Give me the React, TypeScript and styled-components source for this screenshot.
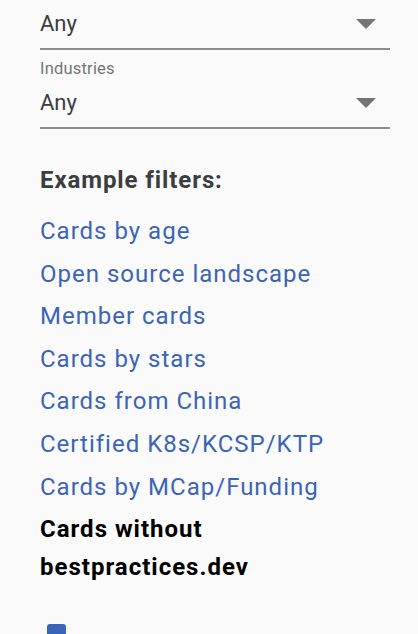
import { createGlobalStyle } from "styled-components"
import styled from "styled-components"

const GlobalStyle = createGlobalStyle`
    html, body {
        margin: 0;
        padding: 0;
        background: #fafafa;
        font-family: Roboto, "Noto Sans", Arial, sans-serif;
    }
`

const Sidebar = styled.div`
    width: 350px;
    padding: 0 28px 0 40px;
    overflow: hidden;
    height: 634px;
`

const Field = styled.div`
    display: flex;
    flex-direction: column;
    margin-bottom: 9px;
`

const Label = styled.label`
    font-size: 16.5px;
    line-height: 20px;
    color: #757575;
    letter-spacing: 0.2px;
`

const Select = styled.div`
    display: flex;
    align-items: center;
    justify-content: space-between;
    padding: 10px 14px 10px 0;
    line-height: 28px;
    font-size: 22px;
    color: #3a3d42;
    border-bottom: 2px solid #8c8c8c;
`

const Arrow = styled.span`
    width: 0;
    height: 0;
    border-left: 10px solid transparent;
    border-right: 10px solid transparent;
    border-top: 10px solid #757575;
`

const Title = styled.div`
    padding-top: 28px;
    font-size: 24px;
    line-height: 28px;
    font-weight: 700;
    letter-spacing: 0.9px;
    color: #3a3d42;
    margin-bottom: 18px;
`

const List = styled.ul`
    list-style: none;
    margin: 0;
    padding: 0;
`

const Item = styled.li<{ $active?: boolean }>`
    font-size: 24px;
    line-height: 38px;
    letter-spacing: 1px;
    margin-bottom: 4.6px;
    color: ${p => p.$active ? "#000" : "#3b64b8"};
    font-weight: ${p => p.$active ? 700 : 400};
    cursor: pointer;
`

const CheckRow = styled.div`
    display: flex;
    align-items: center;
    margin-top: 38px;
    padding-left: 7px;
`

const Box = styled.span`
    width: 19px;
    height: 19px;
    border-radius: 3px;
    background: #3b64b8;
`

const filters = [
    "Cards by age",
    "Open source landscape",
    "Member cards",
    "Cards by stars",
    "Cards from China",
    "Certified K8s/KCSP/KTP",
    "Cards by MCap/Funding",
]

const App = () => {
    return (
        <div>
            <GlobalStyle />
            <Sidebar>
                <Field>
                    <Select>
                        <span>Any</span>
                        <Arrow />
                    </Select>
                </Field>
                <Field>
                    <Label>Industries</Label>
                    <Select>
                        <span>Any</span>
                        <Arrow />
                    </Select>
                </Field>
                <Title>Example filters:</Title>
                <List>
                    {filters.map(f => <Item key={f}>{f}</Item>)}
                    <Item $active>Cards without bestpractices.dev</Item>
                </List>
                <CheckRow>
                    <Box />
                </CheckRow>
            </Sidebar>
        </div>
    )
}

export default App
